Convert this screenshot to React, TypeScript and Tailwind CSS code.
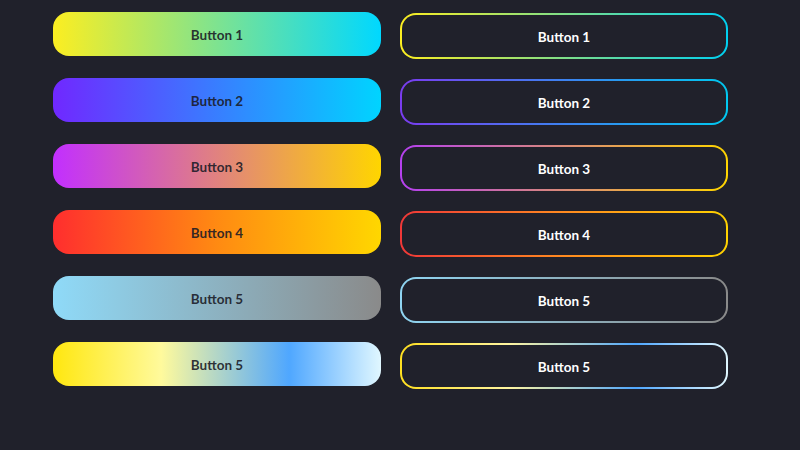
import React from 'react';

/* ─── Gradient presets ─────────────────────────────────────── */

type Preset = {
  label: string;
  fill: string; // tailwind class for the solid gradient button
  ring: string; // tailwind class for the outline's gradient border
};

const presets: Preset[] = [
  {
    label: 'Button 1',
    fill: 'bg-[linear-gradient(90deg,#fcee21,#00d8ff)]',
    ring: 'bg-[linear-gradient(90deg,#fcee21,#00d0f0)]',
  },
  {
    label: 'Button 2',
    fill: 'bg-[linear-gradient(90deg,#7028ff,#00d4ff)]',
    ring: 'bg-[linear-gradient(90deg,#7a3cf0,#00c8f0)]',
  },
  {
    label: 'Button 3',
    fill: 'bg-[linear-gradient(90deg,#c22fff,#ffd500)]',
    ring: 'bg-[linear-gradient(90deg,#b540f0,#ffd500)]',
  },
  {
    label: 'Button 4',
    fill: 'bg-[linear-gradient(90deg,#ff2e2e,#ff8a12_50%,#ffd700)]',
    ring: 'bg-[linear-gradient(90deg,#f03838,#ff8a20_50%,#ffd200)]',
  },
  {
    label: 'Button 5',
    fill: 'bg-[linear-gradient(90deg,#8fdaf8,#8a8a8a)]',
    ring: 'bg-[linear-gradient(90deg,#8fd5f2,#8a8a8a)]',
  },
  {
    label: 'Button 5',
    fill: 'bg-[linear-gradient(90deg,#ffe70f,#fffa9c_33%,#4fa7ff_72%,#e0f7ff)]',
    ring: 'bg-[linear-gradient(90deg,#ffe020,#fff5a0_33%,#4fa7ff_72%,#e0f7ff)]',
  },
];

/* ─── Buttons ──────────────────────────────────────────────── */

function FilledButton({ preset }: { preset: Preset }) {
  return (
    <button
      className={`${preset.fill} h-[44px] w-[328px] rounded-2xl pt-[3px] text-[13.5px] font-bold text-[#1a1b26]/90`}
    >
      {preset.label}
    </button>
  );
}

function OutlineButton({ preset }: { preset: Preset }) {
  return (
    <div className={`${preset.ring} h-[46px] w-[328px] rounded-2xl p-[2px]`}>
      <button className="h-full w-full rounded-[14px] bg-[#20212b] pt-[2px] text-[13.5px] font-bold text-white">
        {preset.label}
      </button>
    </div>
  );
}

export default function App() {
  return (
    <div
      className="flex h-[450px] w-[800px] gap-[19px] bg-[#20212b] pl-[53px]"
      style={{ fontFamily: 'Lato, "Open Sans", sans-serif' }}
    >
      <div className="flex flex-col gap-[22px] pt-[12px]">
        {presets.map((p, i) => (
          <FilledButton key={i} preset={p} />
        ))}
      </div>
      <div className="flex flex-col gap-[20px] pt-[13px]">
        {presets.map((p, i) => (
          <OutlineButton key={i} preset={p} />
        ))}
      </div>
    </div>
  );
}
